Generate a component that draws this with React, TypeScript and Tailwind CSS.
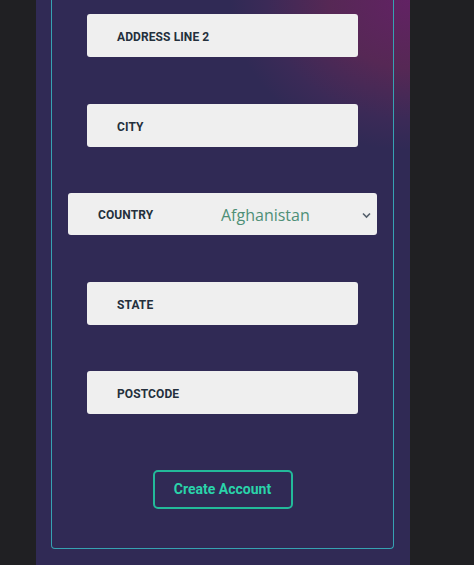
import React from "react";

function Field({ label }: { label: string }) {
  return (
    <div className="w-[271px] h-[43px] rounded-[3px] bg-[#efefef] flex items-center pl-[30px] pt-[2px]">
      <span className="font-['Roboto',sans-serif] font-bold text-[12px] tracking-[0.1px] text-[#24303c]">{label}</span>
    </div>
  );
}

export default function App() {
  return (
    <div className="min-h-screen h-[565px] bg-[#202023] overflow-hidden">
      <div className="ml-[36px] w-[374px] h-[565px] bg-[#302a55] bg-[radial-gradient(ellipse_180px_150px_at_100%_0%,#622264_0%,#562855_45%,#3b2a57_80%,#302a55_100%)] px-[15px]">
        <div className="w-[343px] h-[549px] border-[1.5px] border-t-0 border-[#36a2b2] rounded-b-[4px] flex flex-col items-center pt-[14px]">
          <Field label="ADDRESS LINE 2" />
          <div className="h-[47px]" />
          <Field label="CITY" />
          <div className="h-[46px]" />
          <div className="w-[309px] h-[42px] rounded-[3px] bg-[#efefef] flex items-center pl-[30px] pr-[5px] pt-[2px]">
            <span className="font-['Roboto',sans-serif] font-bold text-[12px] tracking-[0.1px] text-[#24303c] w-[123px]">COUNTRY</span>
            <span className="font-['Open_Sans',sans-serif] text-[16px] text-[#4e8f77] flex-1">Afghanistan</span>
            <svg width="11" height="10" viewBox="0 0 11 10">
              <path d="M2 3.5 L5.5 7 L9 3.5" fill="none" stroke="#55606c" strokeWidth="1.6" />
            </svg>
          </div>
          <div className="h-[47px]" />
          <Field label="STATE" />
          <div className="h-[46px]" />
          <Field label="POSTCODE" />
          <div className="h-[56px]" />
          <button className="w-[140px] h-[39px] rounded-[5px] border-2 border-[#23b99a] flex items-center justify-center font-['Roboto',sans-serif] font-bold text-[14px] text-[#2ad3aa]">
            Create Account
          </button>
        </div>
      </div>
    </div>
  );
}
